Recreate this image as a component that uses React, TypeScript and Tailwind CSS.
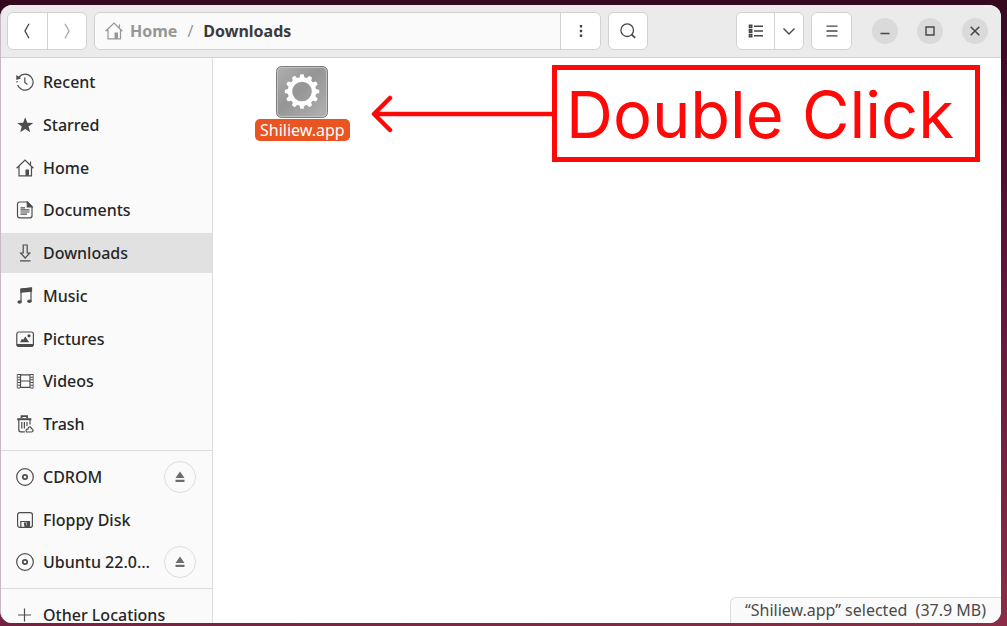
import React from "react";

type IconProps = { children: React.ReactNode; className?: string };

function Icon({ children, className = "w-[18px] h-[18px]" }: IconProps) {
  return (
    <svg
      viewBox="0 0 18 18"
      fill="none"
      stroke="currentColor"
      strokeWidth="1.2"
      aria-hidden="true"
      className={`shrink-0 ${className}`}
    >
      {children}
    </svg>
  );
}

const RecentIcon = () => (
  <Icon>
    <path d="M3 4a8 8 0 1 1-1.400 8M1 9.600a8 8 0 0 1 .1-1.600" />
    <path d="M.3 1.900v5.200l5-1.900z" fill="currentColor" stroke="none" />
    <path d="M8.800 4.500v5l2.700 2" />
  </Icon>
);

const StarIcon = () => (
  <Icon>
    <path
      d="M9.200 1.200l2.100 5.500 5.900.2-4.600 3.700 1.600 5.700-5-3.300-5 3.300 1.600-5.700L1.200 6.900l5.900-.2z"
      fill="currentColor"
      stroke="none"
    />
  </Icon>
);

const HomeIcon = () => (
  <Icon>
    <path d="M.6 9.200L9 1l8.400 8.200M3 7.500v9.300h12.500V7.500M14.500 5.500V2.500" />
    <path d="M9.500 10.500h3.500v6.300H9.500z" fill="currentColor" stroke="none" />
  </Icon>
);

const DocumentIcon = () => (
  <Icon>
    <path d="M3.500 1h8L16 5.500v9.300a2 2 0 0 1-2 2H3.500a2 2 0 0 1-2-2V3a2 2 0 0 1 2-2z" />
    <path d="M11.300 1v5H16z" fill="currentColor" />
    <path d="M4.500 6.800h4.500M4.500 8.900h9M4.500 11h9M4.500 13.100h6.500" />
  </Icon>
);

const DownloadIcon = () => (
  <Icon>
    <path d="M7.200 1h4v8h2.600L9.200 14 4.600 9h2.600zM4 16.900h10.500" />
  </Icon>
);

const MusicIcon = () => (
  <Icon>
    <path d="M5 15V2.200l10-1V14" />
    <path d="M5 2l10.500-1v3.200L5 5.200z" fill="currentColor" />
    <ellipse cx="3.600" cy="15" rx="2.200" ry="1.700" fill="currentColor" stroke="none" />
    <ellipse cx="13.400" cy="14.200" rx="2.200" ry="1.700" fill="currentColor" stroke="none" />
  </Icon>
);

const PictureIcon = () => (
  <Icon>
    <rect x=".8" y="2" width="16.600" height="13.800" rx="2" />
    <path d="M1 14.500h16.200v.8l-1 1.200H2l-1-1.200z" fill="currentColor" />
    <path d="M4 12.300l2-3.500 1.200 1L9.300 6.500l3.900 5.800z" fill="currentColor" stroke="none" />
    <circle cx="13" cy="5.800" r="1.600" fill="currentColor" stroke="none" />
  </Icon>
);

const VideoIcon = () => (
  <Icon>
    <path d="M4.500 2v14M14 2v14M4.500 2.800H14M4.500 9H14M4.500 15.400H14" />
    <path d="M1.300 2v14.200M17.200 2v14.200" strokeWidth=".8" />
    <path d="M2.800 2v14.400M15.700 2v14.400" strokeWidth="2.600" strokeDasharray="1 1.680" />
  </Icon>
);

const TrashIcon = () => (
  <Icon>
    <path d="M1.200 4.200h14.200" strokeWidth="2" />
    <path d="M5.500 3V1.200h5.600V3" strokeWidth="1.800" />
    <path d="M2.800 5v9.800a2 2 0 0 0 2 2h4M14 5v4.500M5.800 7v6.500M8.400 7v6.500M11 7v4" />
    <path d="M10.500 16.800c-1.200-1.600 0-3 1.500-3 .3-1.800 2-2.600 3-1.200.2 1 1.800 1.200 2 2.600.1 1-.6 1.800-1.600 1.800z" />
  </Icon>
);

const DiscIcon = () => (
  <Icon>
    <circle cx="9" cy="9" r="8.300" />
    <circle cx="9" cy="9" r="2.200" strokeWidth="1.700" />
  </Icon>
);

const FloppyIcon = () => (
  <Icon>
    <rect x="1.600" y="1.600" width="14.800" height="14.800" rx="2.200" />
    <path d="M4.800 16v-5.500h8.700V16" />
    <path d="M8 11.500h2v3H8zM10.500 11h3v5h-5v-1.500h2z" fill="currentColor" stroke="none" />
  </Icon>
);

const PlusIcon = () => (
  <Icon>
    <path d="M8.500 2.500v13M2 9h13" />
  </Icon>
);

const places = [
  { name: "Recent", icon: <RecentIcon /> },
  { name: "Starred", icon: <StarIcon /> },
  { name: "Home", icon: <HomeIcon /> },
  { name: "Documents", icon: <DocumentIcon /> },
  { name: "Downloads", icon: <DownloadIcon />, active: true },
  { name: "Music", icon: <MusicIcon /> },
  { name: "Pictures", icon: <PictureIcon /> },
  { name: "Videos", icon: <VideoIcon /> },
  { name: "Trash", icon: <TrashIcon /> },
];

const devices = [
  { name: "CDROM", icon: <DiscIcon />, eject: true },
  { name: "Floppy Disk", icon: <FloppyIcon /> },
  { name: "Ubuntu 22.0…", icon: <DiscIcon />, eject: true },
];

type RowProps = {
  name: string;
  icon: React.ReactNode;
  active?: boolean;
  eject?: boolean;
};

function PlaceRow({ name, icon, active, eject }: RowProps) {
  return (
    <li
      className={`flex h-10 shrink-0 items-center pl-[15px] pr-4 ${
        active ? "bg-[#e1e1e1]" : ""
      }`}
    >
      <a href="#" className="flex flex-1 items-center gap-[9px] whitespace-nowrap leading-4">
        <span className="text-[#4d4d4d]">{icon}</span>
        {name}
      </a>
      {eject && (
        <button
          aria-label={`Eject ${name}`}
          className="flex h-8 w-8 shrink-0 items-center justify-center rounded-full border border-[#dedede] text-[#6c6c6c]"
        >
          <Icon>
            <path d="M9 3.500l4.500 6.500h-9zM4.500 11.800h9v2.200h-9z" fill="currentColor" stroke="none" />
          </Icon>
        </button>
      )}
    </li>
  );
}

const boxClass = "flex h-[38px] shrink-0 rounded-md border border-[#d2d2d2] bg-white text-[#454545]";
const cellClass = "flex flex-1 items-center justify-center";
const roundClass = "flex h-[26px] w-[26px] items-center justify-center rounded-full bg-[#dadada] text-[#454545]";

function HeaderBar() {
  return (
    <header className="flex h-[53px] shrink-0 items-start gap-[7px] border-b border-[#d3d3d3] bg-[#ebebeb] pl-[6px] pr-[13px] pt-[7px]">
      <div className={`${boxClass} w-20`}>
        <button aria-label="Back" className={`${cellClass} border-r border-[#d2d2d2]`}>
          <Icon>
            <path d="M11 1.800L7 9l4 7.200" strokeWidth="1.300" />
          </Icon>
        </button>
        <button aria-label="Forward" className={`${cellClass} text-[#a5a5a5]`}>
          <Icon>
            <path d="M7 1.800L11 9l-4 7.200" strokeWidth="1.300" />
          </Icon>
        </button>
      </div>

      {/* Path bar */}
      <div className="flex h-[38px] min-w-0 flex-1 rounded-md border border-[#d2d2d2] bg-[#fafafa] font-bold">
        <nav className="flex flex-1 items-center pl-[10px] text-[#969696]">
          <a href="#" className="flex items-center gap-[7px]">
            <HomeIcon />
            Home
          </a>
          <span className="px-[10px] font-normal">/</span>
          <a href="#" className="text-[#3b3b3b]">
            Downloads
          </a>
        </nav>
        <button
          aria-label="Folder menu"
          className="flex w-10 items-center justify-center rounded-r-md border-l border-[#d2d2d2] bg-white text-[#454545]"
        >
          <Icon>
            <path d="M9 3v2.400M9 7.800v2.400M9 12.600V15" strokeWidth="2.400" />
          </Icon>
        </button>
      </div>

      <div className={`${boxClass} mr-[81px] w-10`}>
        <button aria-label="Search" className={cellClass}>
          <Icon>
            <circle cx="8.200" cy="8.200" r="6.300" strokeWidth="1.300" />
            <path d="M12.700 12.700l3.500 3.200" strokeWidth="1.800" />
          </Icon>
        </button>
      </div>

      <div className={`${boxClass} w-[68px]`}>
        <button aria-label="List view" className={`${cellClass} border-r border-[#d2d2d2]`}>
          <Icon>
            <path d="M7 4.200h9M7 9h9M7 13.800h9" strokeWidth="1.400" />
            <path d="M2.500 3.200h2.200v2.200H2.500zM2.500 7.900h2.200v2.200H2.500zM2.500 12.600h2.200v2.200H2.500z" strokeWidth="1.600" />
          </Icon>
        </button>
        <button aria-label="View options" className="flex w-7 items-center justify-center">
          <Icon>
            <path d="M3.500 6.500L9 12l5.500-5.500" strokeWidth="1.400" />
          </Icon>
        </button>
      </div>

      <div className={`${boxClass} w-[41px]`}>
        <button aria-label="Main menu" className={cellClass}>
          <Icon>
            <path d="M3.500 4.200h11M3.500 9h11M3.500 13.800h11" strokeWidth="1.300" />
          </Icon>
        </button>
      </div>

      <div className="ml-[13px] flex h-[38px] items-center gap-[19px]">
        <button aria-label="Minimize" className={roundClass}>
          <Icon>
            <path d="M4.500 11.500h9" strokeWidth="1.300" />
          </Icon>
        </button>
        <button aria-label="Maximize" className={roundClass}>
          <Icon>
            <path d="M5 5h8v8H5z" strokeWidth="1.400" />
          </Icon>
        </button>
        <button aria-label="Close" className={roundClass}>
          <Icon>
            <path d="M4.700 4.700l8.600 8.600M13.300 4.700l-8.600 8.600" strokeWidth="1.500" />
          </Icon>
        </button>
      </div>
    </header>
  );
}

function Sidebar() {
  return (
    <aside className="w-[212px] shrink-0 overflow-hidden border-r border-[#dedede] bg-[#fafafa] text-[#262626]">
      <ul className="mb-[6px] mt-1 flex h-[382px] flex-col justify-between">
        {places.map((place) => (
          <PlaceRow key={place.name} {...place} />
        ))}
      </ul>
      <div className="border-y border-[#dcdcdc] py-[6px]">
        <ul className="flex h-[125px] flex-col justify-between">
          {devices.map((device) => (
            <PlaceRow key={device.name} {...device} />
          ))}
        </ul>
      </div>
      <ul className="pt-[6px]">
        <PlaceRow name="Other Locations" icon={<PlusIcon />} />
      </ul>
    </aside>
  );
}

const teeth = [0, 30, 60, 90, 120, 150, 180, 210, 240, 270, 300, 330];

function AppFileIcon() {
  return (
    <svg viewBox="0 0 52 52" className="h-[52px] w-[52px]" aria-hidden="true">
      <defs>
        <linearGradient id="plate" x1="0" y1="0" x2="1" y2="1">
          <stop offset="0" stopColor="#b0b0b0" />
          <stop offset=".45" stopColor="#959595" />
          <stop offset="1" stopColor="#b2b2b2" />
        </linearGradient>
      </defs>
      <rect x=".5" y=".5" width="51" height="51" rx="5" fill="url(#plate)" stroke="#7c7c7c" />
      <rect x="1.500" y="1.500" width="49" height="49" rx="4" fill="none" stroke="#c2c2c2" />
      <circle cx="26" cy="25.500" r="12" fill="none" stroke="#ffffff" strokeWidth="4.400" />
      {teeth.map((angle) => (
        <path
          key={angle}
          d="M23.200 12.500l1.200-4.200h3.200l1.200 4.200z"
          fill="#ffffff"
          transform={`rotate(${angle} 26 25.500)`}
        />
      ))}
    </svg>
  );
}

function App() {
  return (
    <div className="flex h-screen bg-linear-170 from-[#34081f] from-20% via-[#5c1539] via-55% to-[#8c2d48] pb-[3px] pr-[6px] pt-[5px] font-['Noto_Sans',sans-serif] text-base font-medium">
      <div className="flex min-w-0 flex-1 flex-col overflow-hidden rounded-xl border-l border-[#cbb8c6] bg-white">
        <HeaderBar />
        <div className="flex min-h-0 flex-1">
          <Sidebar />
          <main className="relative flex-1 pl-[42px] pt-2">
            <button className="flex flex-col items-center gap-px">
              <AppFileIcon />
              <span className="rounded-[5px] bg-[#e95420] px-[5px] text-base/[22px] font-normal text-white">
                Shiliew.app
              </span>
            </button>

            {/* Hint over the file area */}
            <div className="absolute right-[21px] top-[7px] flex items-center text-[#ff0808]">
              <svg viewBox="0 0 181 40" className="h-10 w-[181px]" fill="none" stroke="currentColor" aria-hidden="true">
                <path d="M3 20h178" strokeWidth="4.500" />
                <path d="M19 4L3 20l16 16" strokeWidth="4.500" strokeLinecap="round" strokeLinejoin="round" />
              </svg>
              <p className="w-[428px] whitespace-nowrap border-[5px] border-current pl-[9px] pt-[2px] font-['Inter',sans-serif] text-[65px]/[85px] font-normal">
                Double Click
              </p>
            </div>

            <p className="absolute bottom-0 right-0 rounded-tl-md border-l border-t border-[#dcdcdc] bg-[#fafafa] pl-[14px] pr-[15px] text-base/[25px] font-normal whitespace-pre text-[#4a4a4a]">
              “Shiliew.app” selected  (37.9 MB)
            </p>
          </main>
        </div>
      </div>
    </div>
  );
}

export default App;
